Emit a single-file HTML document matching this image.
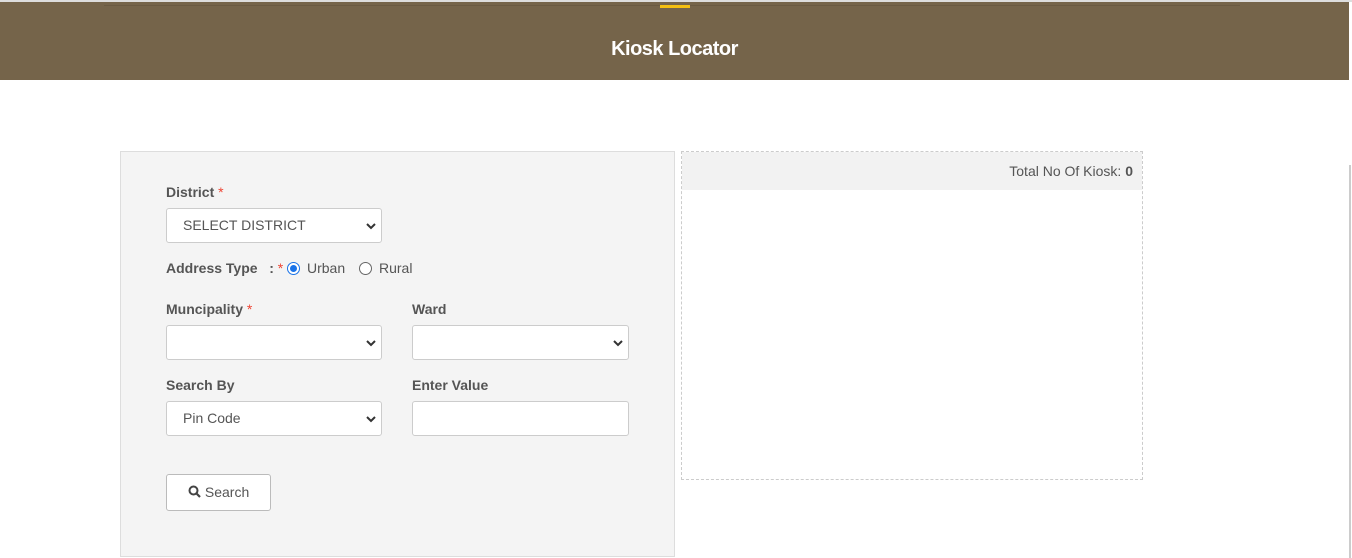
<!DOCTYPE html>
<html><head><style>
*{box-sizing:border-box;margin:0;padding:0}
body{width:1352px;height:558px;overflow:hidden;background:#fff;font-family:"Liberation Sans",Arial,sans-serif;position:relative;color:#555}
.hdr{position:absolute;left:0;top:2px;width:1349px;height:78px;background:#75644a}
.topline{position:absolute;left:0;top:0;width:1352px;height:2px;background:#ddd}
.hline{position:absolute;left:104px;top:5px;width:1136px;height:1px;background:#6a5a42}
.ybar{position:absolute;left:660px;top:5px;width:30px;height:3px;background:#f5c012}
.title{position:absolute;left:0;width:1349px;top:38px;text-align:center;color:#fff;font-weight:bold;font-size:20px;letter-spacing:-0.5px}
.sb{position:absolute;left:1349px;top:165px;width:2px;height:393px;background:#ccc}
.panel{position:absolute;left:120px;top:151px;width:555px;height:406px;background:#f4f4f4;border:1px solid #ddd}
.lbl{position:absolute;font-size:14px;font-weight:bold;color:#555}
.req{color:#e43;font-weight:normal}
.sel{position:absolute;width:216px;height:35px;background:#fff;border:1px solid #ccc;border-radius:3px;font-size:14px;color:#555;padding:8px 0 0 16px}
.sel svg{position:absolute;right:5px;top:13px}
.radio{position:absolute;width:13px;height:13px;border-radius:50%;border:1px solid #666;background:#fff}
.btn{position:absolute;left:166px;top:474px;width:105px;height:37px;border:1px solid #bbb;border-radius:3px;background:#fff;font-size:14px;color:#555;padding:9px 0 0 21px}
.rp{position:absolute;left:681px;top:151px;width:462px;height:329px;border:1px dashed #ccc}
.rph{height:38px;background:#f2f2f2;text-align:right;padding:11px 9px 0 0;font-size:14px;color:#555}
</style></head><body>
<div class="topline"></div>
<div class="hdr"></div>
<div class="hline"></div>
<div class="ybar"></div>
<div class="title">Kiosk Locator</div>
<div class="sb"></div>
<div class="panel"></div>
<div class="lbl" style="left:166px;top:184px">District <span class="req">*</span></div>
<div class="sel" style="left:166px;top:208px">SELECT DISTRICT<svg width="10" height="8" viewBox="0 0 10 8"><path d="M1 2l4 4 4-4" stroke="#333" stroke-width="2" fill="none"/></svg></div>
<div class="lbl" style="left:166px;top:260px">Address Type &nbsp;&nbsp;: <span class="req">*</span></div>
<div class="radio" style="left:287px;top:262px;border:1px solid #1a73e8"><div style="position:absolute;left:2px;top:2px;width:7px;height:7px;border-radius:50%;background:#1a73e8"></div></div>
<div style="position:absolute;left:307px;top:260px;font-size:14px">Urban</div>
<div class="radio" style="left:359px;top:262px"></div>
<div style="position:absolute;left:379px;top:260px;font-size:14px">Rural</div>
<div class="lbl" style="left:166px;top:301px">Muncipality <span class="req">*</span></div>
<div class="lbl" style="left:412px;top:301px">Ward</div>
<div class="sel" style="left:166px;top:325px"><svg width="10" height="8" viewBox="0 0 10 8"><path d="M1 2l4 4 4-4" stroke="#333" stroke-width="2" fill="none"/></svg></div>
<div class="sel" style="left:412px;top:325px;width:217px"><svg width="10" height="8" viewBox="0 0 10 8"><path d="M1 2l4 4 4-4" stroke="#333" stroke-width="2" fill="none"/></svg></div>
<div class="lbl" style="left:166px;top:377px">Search By</div>
<div class="lbl" style="left:412px;top:377px">Enter Value</div>
<div class="sel" style="left:166px;top:401px">Pin Code<svg width="10" height="8" viewBox="0 0 10 8"><path d="M1 2l4 4 4-4" stroke="#333" stroke-width="2" fill="none"/></svg></div>
<div class="sel" style="left:412px;top:401px;width:217px"></div>
<div class="btn"><svg width="13" height="13" viewBox="0 0 13 13" style="vertical-align:-1px"><circle cx="5.5" cy="5.5" r="4" stroke="#444" stroke-width="2" fill="none"/><path d="M8.5 8.5l3.5 3.5" stroke="#444" stroke-width="2.2"/></svg> Search</div>
<div class="rp"><div class="rph">Total No Of Kiosk: <b>0</b></div></div>
</body></html>
